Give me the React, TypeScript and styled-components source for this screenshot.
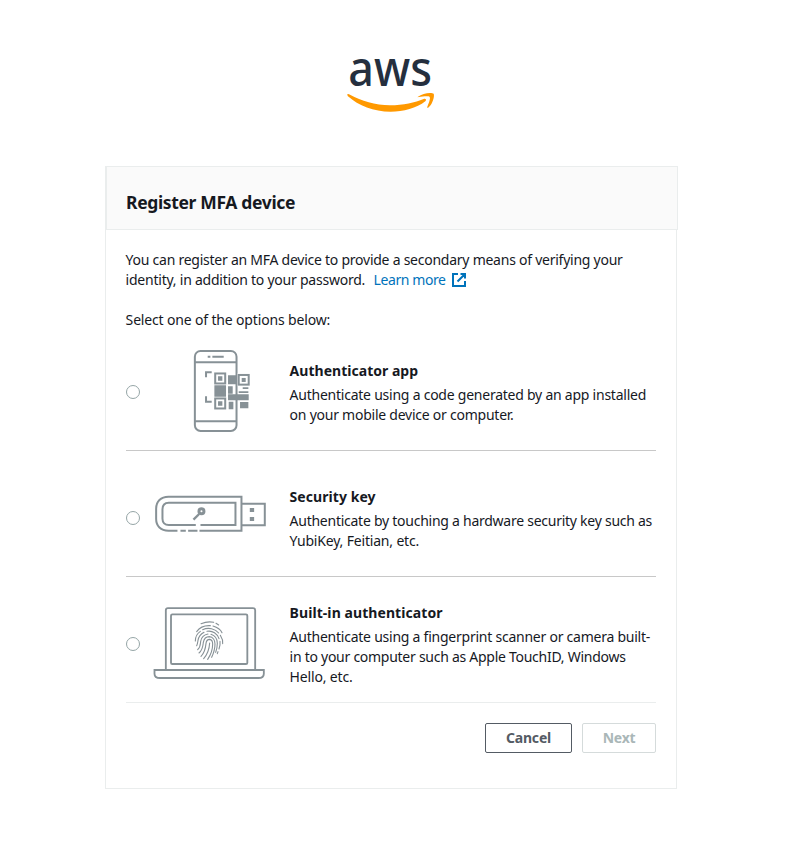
import React, { useState } from 'react';
import styled, { createGlobalStyle } from 'styled-components';

const GlobalStyle = createGlobalStyle`
  * { box-sizing: border-box; }
  body {
    margin: 0;
    background: #fff;
    color: #16191f;
    font: 400 14px/20px 'Noto Sans', 'Open Sans', sans-serif;
  }
`;

const Page = styled.main`
  display: flex;
  flex-direction: column;
  width: 572px;
  min-height: 845px;
  margin-left: 105px;
`;

const Brand = styled.header`
  display: flex;
  height: 166px;
  padding: 45px 0 0 230px;
`;

const Logo = styled.svg`
  display: block;
  width: 110px;
  height: 75px;
  overflow: visible;
`;

const Card = styled.section`
  height: 623px;
  border: 1px solid #eaeded;
`;

const CardHeader = styled.div`
  display: flex;
  align-items: center;
  height: 64px;
  margin: -1px -2px 0 0;
  padding: 8px 19px 0;
  background: #fafafa;
  border: 1px solid #eaeded;
`;

const Title = styled.h1`
  margin: 0;
  font-size: 17.5px;
  line-height: 22px;
  font-weight: 700;
  letter-spacing: -0.35px;
`;

const CardBody = styled.div`
  padding: 20px 20px 0;
`;

const Line = styled.span<{ $track?: number }>`
  display: block;
  white-space: nowrap;
  letter-spacing: ${({ $track = -0.24 }) => $track}px;
`;

const Paragraph = styled.p`
  margin: 0 0 20px -0.4px;
`;

const LinkLine = styled.span`
  display: flex;
  align-items: center;
`;

const LearnMore = styled.a`
  display: flex;
  align-items: center;
  gap: 5px;
  margin-left: 8.5px;
  color: #0073bb;
  text-decoration: none;
`;

const Prompt = styled.p`
  margin: 0 0 4px -0.4px;
`;

const Options = styled.div`
  display: flex;
  flex-direction: column;
  gap: 9px;
`;

const Option = styled.label<{ $last?: boolean }>`
  display: grid;
  grid-template-columns: 14px 120px 1fr;
  align-items: center;
  height: 117px;
  border-bottom: 1px solid ${({ $last }) => ($last ? '#eaeded' : '#c8c8c8')};
  cursor: pointer;
`;

const Radio = styled.input`
  appearance: none;
  width: 14px;
  height: 14px;
  margin: 0;
  border: 1px solid #95a5a6;
  border-radius: 50%;
  background: #fff;
  &:checked { border: 4px solid #0073bb; }
`;

const Art = styled.svg`
  display: block;
  width: 120px;
  height: 100px;
  margin-left: 10px;
  overflow: visible;
`;

const OptionText = styled.div`
  padding: 2px 0 0 29.6px;
`;

const OptionTitle = styled.h2<{ $track: number }>`
  margin: 0 0 4px;
  font-size: 14px;
  line-height: 20px;
  font-weight: 700;
  letter-spacing: ${({ $track }) => $track}px;
`;

const Actions = styled.div`
  display: flex;
  justify-content: flex-end;
  gap: 10px;
  margin-top: 20px;
`;

const Button = styled.button<{ $width: number; $track: number }>`
  width: ${({ $width }) => $width}px;
  height: 30px;
  padding: 0;
  border: 1px solid #545b64;
  border-radius: 2px;
  background: #fff;
  color: #545b64;
  font: 700 14px/20px 'Noto Sans', 'Open Sans', sans-serif;
  letter-spacing: ${({ $track }) => $track}px;
  &:disabled {
    border-color: #d5dbdb;
    color: #aab7b8;
  }
`;

const INK = '#879196';

const AwsLogo = () => (
  <Logo viewBox="0 0 330 225" role="img" aria-label="aws">
    <text x="40" y="124" fill="#252f3e" fontFamily="'Noto Sans', sans-serif" fontSize="148" fontWeight="500" textLength="251" lengthAdjust="spacingAndGlyphs">aws</text>
    <g fill="#ff9900">
      <path d="M37 148C38 146 42 147 45 149C80 168 120 180 165 181C205 181 240 172 266 162C272 160 276 165 271 169C245 190 205 200 167 200C115 200 72 183 38 153Z" />
      <path d="M249 155C262 144 290 141 296 146C299 152 294 175 281 187C278 190 275 188 277 185C281 176 287 160 284 156C280 152 262 155 252 156C248 157 247 156 249 155Z" />
    </g>
  </Logo>
);

const ExternalIcon = () => (
  <svg width="16" height="16" viewBox="0 0 16 16" fill="none" stroke="#0073bb" strokeWidth="2">
    <path d="M7 2H2v12h12V9M9.500 2H14v4.500M14 2L6.500 9.500" />
  </svg>
);

const PhoneArt = () => (
  <Art viewBox="0 0 120 100">
    <g transform="translate(29.700 -1.700) scale(.33333)" fill="none" stroke={INK} strokeWidth="6">
      <rect x="45.500" y="32" width="125" height="240" rx="17" />
      <path d="M45 66H171M45 243H171M84 49.500H92M98 49.500H132" />
      <path d="M79 111V96H96M79 168V184H96" />
      <rect x="106.500" y="99.500" width="30" height="30" />
      <rect x="106.500" y="174.500" width="30" height="30" />
      <g fill={INK} stroke="none">
        <path d="M145 105H171V132H145ZM104 135H139V169H104ZM145 138H159V160H145ZM145 162H207V180H145ZM147 184H161V207H147ZM181 185H206V204H181Z" />
        <path d="M115 108H128V121H115ZM115 183H128V196H115ZM189 141H206V146H189ZM177 153H206V158H177Z" />
      </g>
      <path d="M174 98H212V138H174Z" fill="#fff" stroke="none" />
      <rect x="177" y="104" width="30" height="29" />
      <path d="M186 113H198V125H186Z" fill={INK} stroke="none" />
    </g>
  </Art>
);

const KeyArt = () => (
  <Art viewBox="0 0 120 100">
    <g transform="translate(-5.200 17) scale(.33333)" fill="none" stroke={INK} strokeWidth="6">
      <path d="M98 137H71C48 137 34 123 34 102V71C34 49 48 35 71 35H290V137H164M107 137H123M130 137H158" />
      <path d="M153 120H72C60 120 53 112 53 101V73C53 61 60 53 72 53H272V120H167" />
      <path d="M290 56H360V121H290" />
      <path d="M315 69H328V81H315ZM315 96H328V108H315Z" fill={INK} stroke="none" />
      <circle cx="170" cy="79" r="7.500" strokeWidth="9" />
      <path d="M163 87L146 104" strokeWidth="7" />
    </g>
  </Art>
);

const LaptopArt = () => (
  <Art viewBox="0 0 120 100">
    <g transform="translate(-5 1) scale(.33333)" fill="none" stroke={INK} strokeWidth="5.500">
      <path d="M62.500 222V46Q62.500 39.500 69 39.500H324Q330.500 39.500 330.500 46V222" />
      <rect x="78" y="58" width="229" height="149" rx="4" />
      <path d="M28.500 225H356.500V236Q356.500 249 340 249H45Q28.500 249 28.500 236Z" />
      <g strokeWidth="3.300" strokeLinecap="round">
        <path d="M168 86Q188 78 206 82M213 85L221 90" />
        <path d="M155 110C164 97 180 91 196 92M204 93C217 97 227 104 231 113" />
        <path d="M151 138C151 125 157 115 166 109M173 104C190 96 211 101 221 114M226 121C231 129 234 138 233 146" />
        <path d="M155 152C158 146 158 142 159 136C161 125 168 117 177 112M186 109C203 106 217 116 222 131M225 139C226 147 225 154 222 162" />
        <path d="M158 164C167 156 166 146 167 139C169 128 177 119 189 117M198 118C210 122 217 133 217 145C217 156 215 164 212 172" />
        <path d="M162 174C174 164 174 151 175 142C177 131 184 125 193 125C204 126 210 136 210 147C210 161 206 174 200 187" />
        <path d="M168 184C181 171 182 156 183 145C184 137 188 133 194 133C200 134 203 140 203 147C203 163 197 180 188 193" />
        <path d="M176 191C189 176 193 161 194 144M219 170L217 176" />
      </g>
    </g>
  </Art>
);

type OptionData = {
  id: string;
  title: string;
  track: number;
  lines: [string, number][];
  Picture: () => React.ReactElement;
};

const OPTIONS: OptionData[] = [
  {
    id: 'app',
    title: 'Authenticator app',
    track: 0.024,
    lines: [
      ['Authenticate using a code generated by an app installed', -0.238],
      ['on your mobile device or computer.', -0.243],
    ],
    Picture: PhoneArt,
  },
  {
    id: 'key',
    title: 'Security key',
    track: 0.058,
    lines: [
      ['Authenticate by touching a hardware security key such as', -0.257],
      ['YubiKey, Feitian, etc.', -0.177],
    ],
    Picture: KeyArt,
  },
  {
    id: 'builtin',
    title: 'Built-in authenticator',
    track: 0.076,
    lines: [
      ['Authenticate using a fingerprint scanner or camera built-', -0.24],
      ['in to your computer such as Apple TouchID, Windows', -0.269],
      ['Hello, etc.', -0.162],
    ],
    Picture: LaptopArt,
  },
];

export default function App() {
  const [selected, setSelected] = useState('');
  return (
    <>
      <GlobalStyle />
      <Page>
        <Brand><AwsLogo /></Brand>
        <Card>
          <CardHeader><Title>Register MFA device</Title></CardHeader>
          <CardBody>
            <Paragraph>
              <Line $track={-0.249}>You can register an MFA device to provide a secondary means of verifying your</Line>
              <LinkLine>
                <Line $track={-0.232}>identity, in addition to your password.</Line>
                <LearnMore href="#">
                  <Line $track={-0.412}>Learn more</Line>
                  <ExternalIcon />
                </LearnMore>
              </LinkLine>
            </Paragraph>
            <Prompt><Line $track={-0.16}>Select one of the options below:</Line></Prompt>
            <Options>
              {OPTIONS.map(({ id, title, track, lines, Picture }, i) => (
                <Option key={id} $last={i === OPTIONS.length - 1}>
                  <Radio type="radio" name="mfa" checked={selected === id} onChange={() => setSelected(id)} />
                  <Picture />
                  <OptionText>
                    <OptionTitle $track={track}>{title}</OptionTitle>
                    {lines.map(([text, t]) => <Line key={text} $track={t}>{text}</Line>)}
                  </OptionText>
                </Option>
              ))}
            </Options>
            <Actions>
              <Button $width={87} $track={-0.2}>Cancel</Button>
              <Button $width={74} $track={-0.3} disabled={!selected}>Next</Button>
            </Actions>
          </CardBody>
        </Card>
      </Page>
    </>
  );
}
